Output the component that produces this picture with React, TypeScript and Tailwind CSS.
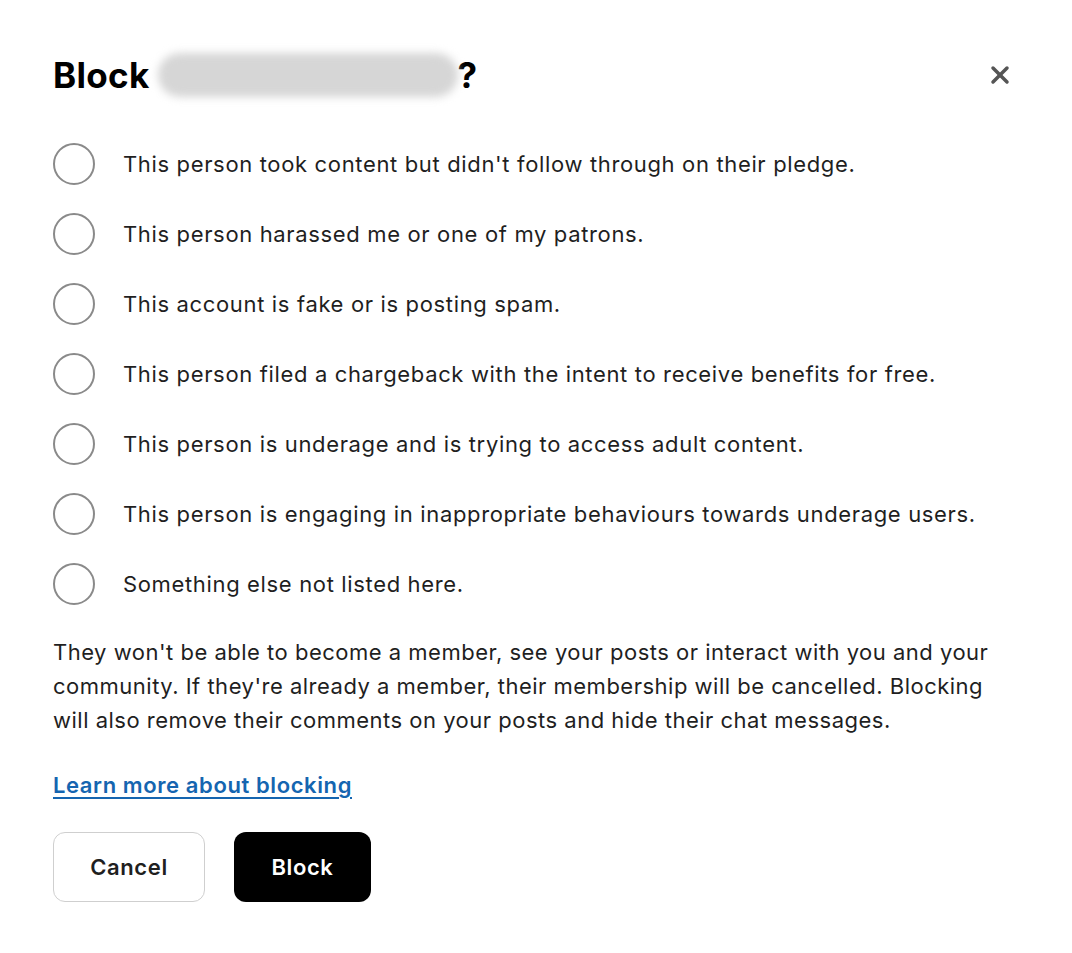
import { X } from "lucide-react";

const reasons = [
  "This person took content but didn't follow through on their pledge.",
  "This person harassed me or one of my patrons.",
  "This account is fake or is posting spam.",
  "This person filed a chargeback with the intent to receive benefits for free.",
  "This person is underage and is trying to access adult content.",
  "This person is engaging in inappropriate behaviours towards underage users.",
  "Something else not listed here.",
];

export default function App() {
  return (
    <div className="min-h-screen bg-white font-['Inter',sans-serif] text-[#1f1f1f]">
      <div className="w-[1072px] pl-[53px] pr-[58px] pt-[52px]">
        {/* Header */}
        <div className="flex items-center justify-between">
          <h1 className="flex items-center text-[35px] font-bold leading-[46px] tracking-[0.3px] text-black">
            <span>Block</span>
            <span className="ml-[8px] inline-block h-[44px] w-[300px] rounded-full bg-[#d6d6d6] blur-[4px]" />
            <span>?</span>
          </h1>
          <button className="text-[#555]">
            <X size={28} strokeWidth={3} />
          </button>
        </div>

        {/* Reasons */}
        <div className="mt-[45px] flex flex-col gap-[28px]">
          {reasons.map((r) => (
            <label key={r} className="flex items-center gap-[28px]">
              <span className="h-[42px] w-[42px] shrink-0 rounded-full border-2 border-[#8a8a8a] bg-white" />
              <span className="text-[22px] leading-[28px] tracking-[0.65px]">{r}</span>
            </label>
          ))}
        </div>

        <p className="mt-[30px] whitespace-nowrap text-[22px] leading-[34px] tracking-[0.5px]">
          They won't be able to become a member, see your posts or interact with you and your
          <br />
          community. If they're already a member, their membership will be cancelled. Blocking
          <br />
          will also remove their comments on your posts and hide their chat messages.
        </p>

        <a href="#" className="mt-[34px] inline-block text-[22px] font-semibold leading-[28px] tracking-[0.6px] text-[#1565b0] underline underline-offset-4">
          Learn more about blocking
        </a>

        {/* Actions */}
        <div className="mt-[33px] flex gap-[29px]">
          <button className="h-[70px] w-[152px] rounded-[12px] border border-[#cfcfcf] bg-white text-[22px] font-semibold tracking-[0.6px] text-[#1f1f1f]">
            Cancel
          </button>
          <button className="h-[70px] w-[137px] rounded-[12px] bg-black text-[22px] font-semibold tracking-[0.6px] text-white">
            Block
          </button>
        </div>
      </div>
    </div>
  );
}
